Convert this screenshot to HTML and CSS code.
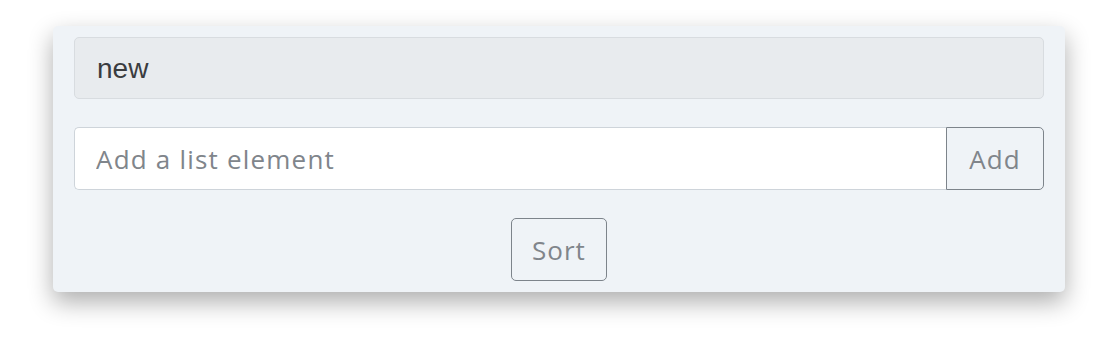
FILE: index.html
```html
<!DOCTYPE html>
<html>
<head>
<meta charset="utf-8">
<link rel="stylesheet" href="styles.css">
</head>
<body>
<div class="page">
  <div class="card">
    <div class="item">new</div>
    <div class="input-group">
      <input class="field" type="text" placeholder="Add a list element">
      <button class="btn btn-add">Add</button>
    </div>
    <div class="actions">
      <button class="btn btn-sort">Sort</button>
    </div>
  </div>
</div>
</body>
</html>
```
FILE: styles.css
```css
* { box-sizing: border-box; }
html, body { margin: 0; background: #ffffff; }
body { font-family: "Open Sans", "Noto Sans", sans-serif; }
.page { padding: 26px 41px 60px 53px; }
.card {
  width: 1012px;
  background: #eff3f7;
  border-radius: 5px;
  padding: 11px 21px 11px 21px;
  box-shadow: 0 10px 24px rgba(0,0,0,0.32);
  display: flex;
  flex-direction: column;
  gap: 28px;
}
.item {
  height: 62px;
  background: #e8ebee;
  border: 1px solid #d8dce0;
  border-radius: 5px;
  padding: 2px 21px 0 22px;
  display: flex;
  align-items: center;
  font-family: "Liberation Sans", Arial, sans-serif;
  font-size: 28px;
  color: #3a3c3f;
}
.input-group { display: flex; height: 63px; }
.field {
  flex: 1;
  border: 1px solid #ced4da;
  border-right: none;
  border-radius: 5px 0 0 5px;
  background: #fff;
  padding: 0 21px;
  font-family: inherit;
  font-size: 26px;
  letter-spacing: 1.2px;
  color: #212529;
  outline: none;
}
.field::placeholder { color: #80858b; }
.btn {
  font-family: inherit;
  font-size: 26px;
  letter-spacing: 1px;
  color: #80858b;
  background: transparent;
  border: 1px solid #7d848b;
  height: 63px;
  padding: 0;
}
.btn-add { width: 98px; border-radius: 0 5px 5px 0; }
.actions { display: flex; justify-content: center; }
.btn-sort { width: 96px; border-radius: 5px; }
```
